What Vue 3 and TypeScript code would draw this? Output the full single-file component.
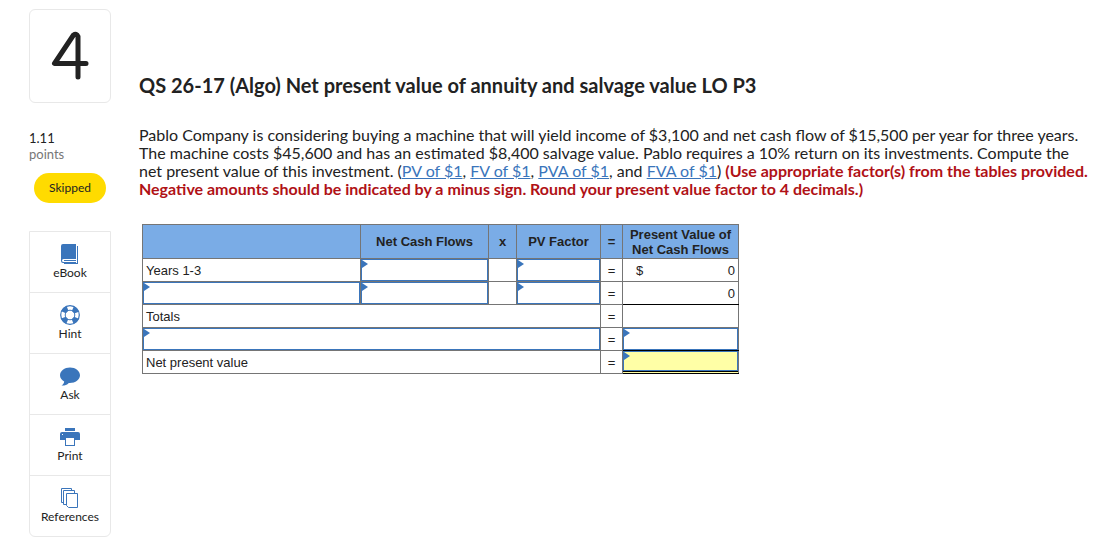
<script setup lang="ts">
import { ref } from 'vue'

const tools = ['eBook', 'Hint', 'Ask', 'Print', 'References']
const factorTables = ['PV of $1', 'FV of $1', 'PVA of $1']
const flows = ref(['', ''])
const factors = ref(['', ''])
const label = ref('')
const adjustmentLabel = ref('')
const adjustment = ref('')
const netPresentValue = ref('')
</script>

<template>
  <div class="page">
    <aside class="side">
      <div class="number">
        <svg width="38" height="50" viewBox="0 0 38 50" role="img" aria-label="4">
          <path d="M27 46V5.500Q25.500 2 22.500 4L3.500 32.500H35" />
        </svg>
      </div>
      <div class="points"><span class="score">1.11</span><span class="unit">points</span></div>
      <span class="status">Skipped</span>
      <nav class="tools">
        <button v-for="tool in tools" :key="tool" type="button" class="tool">
          <svg v-if="tool === 'eBook'" width="20" height="20" viewBox="0 0 20 20">
            <path fill="#3a75bb" d="M3 0h13v15H3.500Q2 15 2 16.500T3.500 18H16v1H3Q1 19 1 17V2Q1 0 3 0Z" />
            <path fill="#3a75bb" d="M17 2h1v18H4v-1h13ZM4 16h12v1H4Z" />
          </svg>
          <svg v-else-if="tool === 'Hint'" width="20" height="20" viewBox="0 0 20 20">
            <circle cx="10" cy="10" r="9.300" fill="none" stroke="#3a75bb" stroke-width="1.200" />
            <circle cx="10" cy="10" r="4.800" fill="none" stroke="#3a75bb" stroke-width="1" />
            <circle cx="10" cy="10" r="7" fill="none" stroke="#3a75bb" stroke-width="5" stroke-dasharray="5.500 5.495" stroke-dashoffset="-2.750" />
          </svg>
          <svg v-else-if="tool === 'Ask'" width="20" height="20" viewBox="0 0 20 20">
            <path fill="#3a75bb" d="M10 1.500C4.500 1.500 0 5 0 9.200c0 2.700 1.600 4.900 4.200 6.200-.2 1.600-1 3-2.700 4.100 3 .2 5.500-.7 7.300-2.600C15 17.300 20 13.800 20 9.200 20 5 15.500 1.500 10 1.500Z" />
          </svg>
          <svg v-else-if="tool === 'Print'" width="20" height="20" viewBox="0 0 20 20">
            <path fill="#3a75bb" fill-rule="evenodd" d="M5 1h10v3H5ZM2 5h16q2 0 2 2v6h-5v6H5v-6H0V7q0-2 2-2ZM6 11v7h8v-7ZM2 7v1h1V7Z" />
          </svg>
          <svg v-else width="20" height="20" viewBox="0 0 20 20">
            <path fill="none" stroke="#3a75bb" d="M6.500 5.500h11v14h-9l-2-2ZM6 16.500H3.500v-14h11v2.500M3.500 14.500h-2V.500h10v2" />
          </svg>
          <span>{{ tool }}</span>
        </button>
      </nav>
    </aside>

    <main class="main">
      <h1>QS 26-17 (Algo) Net present value of annuity and salvage value LO P3</h1>
      <p class="problem">
        Pablo Company is considering buying a machine that will yield income of $3,100 and net cash flow of $15,500 per year for three years.<br />
        The machine costs $45,600 and has an estimated $8,400 salvage value. Pablo requires a 10% return on its investments. Compute the<br />
        net present value of this investment. (<template v-for="name in factorTables" :key="name"><a href="#">{{ name }}</a>, </template>and <a href="#">FVA of $1</a>)
        <strong>(Use appropriate factor(s) from the tables provided.<br />
        Negative amounts should be indicated by a minus sign. Round your present value factor to 4 decimals.)</strong>
      </p>

      <table class="sheet">
        <colgroup>
          <col class="c-label" /><col class="c-flow" /><col class="c-times" /><col class="c-factor" /><col class="c-equals" /><col class="c-value" />
        </colgroup>
        <thead>
          <tr>
            <th></th><th>Net Cash Flows</th><th>x</th><th>PV Factor</th><th>=</th><th>Present Value of Net Cash Flows</th>
          </tr>
        </thead>
        <tbody>
          <tr>
            <td class="text">Years 1-3</td>
            <td class="entry"><input v-model="flows[0]" type="text" aria-label="Years 1-3 net cash flow" /></td>
            <td></td>
            <td class="entry"><input v-model="factors[0]" type="text" aria-label="Years 1-3 PV factor" /></td>
            <td class="eq">=</td>
            <td><div class="money"><span>$</span><span>0</span></div></td>
          </tr>
          <tr>
            <td class="entry"><input v-model="label" type="text" aria-label="Cash flow description" /></td>
            <td class="entry"><input v-model="flows[1]" type="text" aria-label="Net cash flow" /></td>
            <td></td>
            <td class="entry"><input v-model="factors[1]" type="text" aria-label="PV factor" /></td>
            <td class="eq">=</td>
            <td class="ruled"><div class="money"><span></span><span>0</span></div></td>
          </tr>
          <tr>
            <td class="text" colspan="4">Totals</td>
            <td class="eq">=</td>
            <td></td>
          </tr>
          <tr>
            <td class="entry" colspan="4"><input v-model="adjustmentLabel" type="text" aria-label="Adjustment description" /></td>
            <td class="eq">=</td>
            <td class="entry ruled"><input v-model="adjustment" type="text" aria-label="Adjustment amount" /></td>
          </tr>
          <tr>
            <td class="text" colspan="4">Net present value</td>
            <td class="eq">=</td>
            <td class="entry ruled total"><input v-model="netPresentValue" type="text" aria-label="Net present value" /></td>
          </tr>
        </tbody>
      </table>
    </main>
  </div>
</template>

<style>
body {
  margin: 0;
  background: #fff;
}
</style>

<style scoped>
.page {
  display: flex;
  align-items: flex-start;
  gap: 28px;
  padding: 9px 16px 16px 29px;
  font-family: Lato, sans-serif;
  color: #222;
}
.side {
  flex: 0 0 82px;
  display: flex;
  flex-direction: column;
}
.number {
  display: flex;
  align-items: center;
  justify-content: center;
  height: 92px;
  border: 1px solid #e8e8e8;
  border-radius: 6px;
}
.number path {
  fill: none;
  stroke: #222;
  stroke-width: 5;
  stroke-linecap: round;
  stroke-linejoin: round;
}
.points {
  display: flex;
  flex-direction: column;
  margin-top: 27px;
  font-size: 13px;
  line-height: 16px;
}
.unit {
  color: #777;
}
.status {
  align-self: center;
  margin-top: 11px;
  padding: 0 15px;
  border-radius: 15px;
  background: #ffdb00;
  font-size: 12px;
  line-height: 30px;
}
.tools {
  margin-top: 28px;
  border: 1px solid #e8e8e8;
  border-radius: 0 0 6px 6px;
}
.tool {
  display: flex;
  flex-direction: column;
  align-items: center;
  gap: 1px;
  width: 100%;
  height: 61px;
  padding: 12px 0 0;
  border: 0;
  border-bottom: 1px solid #e8e8e8;
  background: none;
  color: #222;
  font: 12px/16px Lato, sans-serif;
}
.tool:last-child {
  height: 60px;
  border-bottom: 0;
}
.main {
  flex: 1;
  min-width: 0;
}
h1 {
  margin: 64px 0 0;
  font-size: 20px;
  line-height: 24px;
  font-weight: 700;
}
.problem {
  margin: 29px 0 0;
  font-size: 16px;
  line-height: 18px;
  white-space: nowrap;
}
.problem a {
  color: #3a75bb;
}
.problem strong {
  color: #b01116;
}
.sheet {
  margin: 26px 0 0 3px;
  width: 597px;
  border-collapse: collapse;
  table-layout: fixed;
  font-family: "Liberation Sans", Arial, sans-serif;
  font-size: 13px;
  line-height: 15px;
}
.c-label { width: 218px; }
.c-flow { width: 128px; }
.c-times { width: 28px; }
.c-factor { width: 84px; }
.c-equals { width: 22px; }
.c-value { width: 116px; }
th,
td {
  box-sizing: border-box;
  height: 23px;
  padding: 0;
  border: 1px solid #757575;
}
th {
  height: 34px;
  background: #7aace6;
}
.text {
  padding-left: 3px;
}
.eq {
  text-align: center;
}
.money {
  display: flex;
  justify-content: space-between;
  padding: 0 3px 0 13px;
}
.entry {
  position: relative;
}
.entry::before {
  content: "";
  position: absolute;
  top: 1px;
  left: 1px;
  border: 4px solid transparent;
  border-left: 6px solid #3a75bb;
  border-right: 0;
}
.entry input {
  display: block;
  box-sizing: border-box;
  width: 100%;
  height: 22px;
  padding: 0 6px;
  border: 1px solid #3a75bb;
  border-radius: 0;
  background: #fff;
  font: inherit;
  text-align: right;
}
.ruled {
  border-bottom-color: #000;
}
.total {
  background: #ffffa6;
  vertical-align: top;
}
.total input {
  height: 20px;
  background: #ffffa6;
  box-shadow: 0 1px 0 #000;
}
</style>
